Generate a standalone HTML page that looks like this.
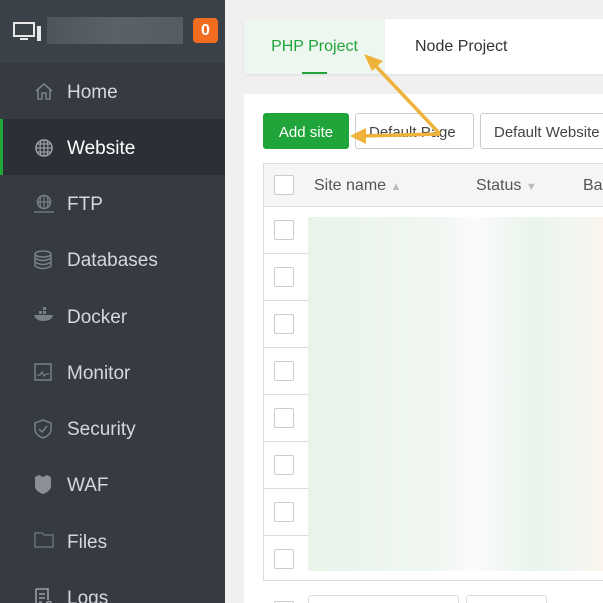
<!DOCTYPE html>
<html style="width:603px;height:603px;overflow:hidden"><head><style>
*{margin:0;padding:0;box-sizing:border-box}
body{width:603px;height:603px;overflow:hidden;background:#f0f0f0;font-family:"Liberation Sans",sans-serif;position:relative}
.sb{position:absolute;left:0;top:0;width:225px;height:603px;background:#353b41}
.hd{position:absolute;left:0;top:0;width:225px;height:63px;background:#3b4148}
.blur{position:absolute;left:47px;top:17px;width:136px;height:27px;background:linear-gradient(90deg,#4f555d,#5b6169,#565c64)}
.badge{position:absolute;left:193px;top:18px;width:25px;height:25px;background:#f36d21;border-radius:4px;color:#fff;font-weight:bold;font-size:16px;text-align:center;line-height:25px}
.item{position:absolute;left:0;width:225px;height:56px;color:#d3d8dd;font-size:19px;line-height:60px}
.item span{position:absolute;left:67px}
.item svg{position:absolute;left:34px;top:19px}
.act{background:#2b3036;color:#fff;border-left:3px solid #20a53a}
.tabs{position:absolute;left:244px;top:19px;width:370px;height:55px;background:#fff;border-radius:4px;box-shadow:0 1px 3px rgba(0,0,0,.08)}
.t1{position:absolute;left:0;top:0;width:141px;height:55px;background:#eef7ef;border-radius:4px 0 0 4px;color:#20a53a;font-size:16px;text-align:center;line-height:56px}
.t1:after{content:"";position:absolute;left:58px;bottom:0;width:25px;height:2px;background:#20a53a}
.t2{position:absolute;left:171px;top:0;font-size:16px;color:#333;line-height:56px}
.card{position:absolute;left:244px;top:94px;width:370px;height:520px;background:#fff}
.btn{position:absolute;top:113px;height:36px;border:1px solid #ccc;border-radius:3px;font-size:15px;color:#444;line-height:37px;padding:0 13px;background:#fff;white-space:nowrap}
.tbl{position:absolute;left:263px;top:163px;width:350px;height:418px;border:1px solid #ddd}
.th{height:43px;background:#f5f5f5;border-bottom:1px solid #ddd;position:relative;font-size:16px;color:#555;line-height:43px}
.cb{position:absolute;left:10px;width:20px;height:20px;border:1px solid #ccc;border-radius:2px;background:#fff}
.rl{position:absolute;left:0;width:44px;height:1px;background:#ddd}
.bl{position:absolute;left:308px;top:217px;width:300px;height:354px;background:linear-gradient(90deg,#e8f3ea 0%,#f1f7f2 45%,#fbfbfb 55%,#eaf4ec 75%,#f1f6f1 88%,#fdf4ee 100%)}
</style></head><body>
<div class="sb">
<div class="hd"><svg style="position:absolute;left:13px;top:22px" width="29" height="20" viewBox="0 0 29 20"><rect x="1" y="1" width="20" height="13" fill="none" stroke="#e8e8e8" stroke-width="2"/><rect x="7" y="16" width="8" height="2" fill="#e8e8e8"/><rect x="24" y="4" width="4" height="15" fill="#e8e8e8"/></svg><div class="blur"></div><div class="badge">0</div></div>
<div class="item" style="top:63px"><svg width="20" height="18" viewBox="0 0 20 18"><path d="M2 9L10 2L18 9M4 7V17H8V11H12V17H16V7" fill="none" stroke="#7a8088" stroke-width="1.6"/></svg><span>Home</span></div>
<div class="item act" style="top:119px"><svg style="left:31px" width="20" height="20" viewBox="0 0 20 20"><circle cx="10" cy="10" r="8" fill="none" stroke="#9aa0a6" stroke-width="1.6"/><path d="M2 10H18M10 2V18M4 6H16M4 14H16M7 3Q5 10 7 17M13 3Q15 10 13 17" fill="none" stroke="#9aa0a6" stroke-width="1.2"/></svg><span style="left:64px">Website</span></div>
<div class="item" style="top:175px"><svg width="20" height="20" viewBox="0 0 20 20"><circle cx="10" cy="8" r="6.5" fill="none" stroke="#7a8088" stroke-width="1.5"/><path d="M3.5 8H16.5M10 1.5V14.5M7 2Q5 8 7 14M13 2Q15 8 13 14M0 18H20" fill="none" stroke="#7a8088" stroke-width="1.2"/></svg><span>FTP</span></div>
<div class="item" style="top:231px"><svg width="18" height="20" viewBox="0 0 18 20"><ellipse cx="9" cy="4" rx="8" ry="3" fill="none" stroke="#7a8088" stroke-width="1.5"/><path d="M1 4V16Q9 21 17 16V4M1 8Q9 13 17 8M1 12Q9 17 17 12" fill="none" stroke="#7a8088" stroke-width="1.5"/></svg><span>Databases</span></div>
<div class="item" style="top:288px"><svg width="20" height="16" viewBox="0 0 20 16"><path d="M0 8H19Q18 14 9 14Q2 14 0 8Z" fill="#7a8088"/><rect x="5" y="4" width="3" height="3" fill="#7a8088"/><rect x="9" y="4" width="3" height="3" fill="#7a8088"/><rect x="9" y="0" width="3" height="3" fill="#7a8088"/></svg><span>Docker</span></div>
<div class="item" style="top:344px"><svg width="18" height="18" viewBox="0 0 18 18"><rect x="1" y="1" width="16" height="16" fill="none" stroke="#7a8088" stroke-width="1.5"/><path d="M3 12H6L8 9L10 13L12 11H15" fill="none" stroke="#7a8088" stroke-width="1.2"/></svg><span>Monitor</span></div>
<div class="item" style="top:400px"><svg width="18" height="20" viewBox="0 0 18 20"><path d="M9 1L17 4V10Q17 16 9 19Q1 16 1 10V4Z M5 10L8 13L13 7" fill="none" stroke="#7a8088" stroke-width="1.5"/></svg><span>Security</span></div>
<div class="item" style="top:456px"><svg width="18" height="20" viewBox="0 0 18 20"><path d="M1 2L5 0L9 2L13 0L17 2V11Q17 16 9 19Q1 16 1 11Z" fill="#8a9096"/></svg><span>WAF</span></div>
<div class="item" style="top:513px"><svg width="20" height="16" viewBox="0 0 20 16"><path d="M1 1H8L10 3H19V15H1Z" fill="none" stroke="#6a7078" stroke-width="1.5"/></svg><span>Files</span></div>
<div class="item" style="top:569px"><svg width="20" height="20" viewBox="0 0 20 20"><path d="M2 1H14V12M2 1V19H10M5 6H11M5 10H11M5 14H8" fill="none" stroke="#9aa0a6" stroke-width="1.6"/><circle cx="15" cy="16" r="2.5" fill="none" stroke="#9aa0a6" stroke-width="1.6"/></svg><span>Logs</span></div>
</div>
<div class="tabs"><div class="t1">PHP Project</div><div class="t2">Node Project</div></div>
<div class="card"></div>
<div class="btn" style="left:263px;background:#20a53a;border-color:#20a53a;color:#fff;width:86px;text-align:center;padding:0">Add site</div>
<div class="btn" style="left:355px;width:119px">Default Page</div>
<div class="btn" style="left:480px;width:140px">Default Website</div>
<div class="tbl">
<div class="th"><div class="cb" style="top:11px"></div><span style="position:absolute;left:50px">Site name <span style="color:#bbb;font-size:11px">▲</span></span><span style="position:absolute;left:212px">Status <span style="color:#bbb;font-size:11px">▼</span></span><span style="position:absolute;left:319px">Bac</span></div>
<div class="cb" style="top:56px"></div><div class="rl" style="top:89px"></div>
<div class="cb" style="top:103px"></div><div class="rl" style="top:136px"></div>
<div class="cb" style="top:150px"></div><div class="rl" style="top:183px"></div>
<div class="cb" style="top:197px"></div><div class="rl" style="top:230px"></div>
<div class="cb" style="top:244px"></div><div class="rl" style="top:277px"></div>
<div class="cb" style="top:291px"></div><div class="rl" style="top:324px"></div>
<div class="cb" style="top:338px"></div><div class="rl" style="top:371px"></div>
<div class="cb" style="top:385px"></div>
</div>
<div class="bl"></div>
<div style="position:absolute;left:308px;top:595px;width:151px;height:20px;border:1px solid #ddd;border-radius:3px;background:#fff"></div>
<div style="position:absolute;left:466px;top:595px;width:81px;height:20px;border:1px solid #ddd;border-radius:3px;background:#fff"></div>
<div style="position:absolute;left:274px;top:601px;width:20px;height:20px;border:1px solid #ccc;border-radius:2px;background:#fff"></div>
<svg style="position:absolute;left:0;top:0" width="603" height="603"><g stroke="#efb23a" stroke-width="3.5" fill="#efb23a" stroke-linejoin="round"><line x1="440" y1="134" x2="372" y2="62"/><line x1="440" y1="134" x2="360" y2="136"/></g><polygon points="364,54 383,61 372,71" fill="#efb23a"/><polygon points="350,136 366,128 366,144" fill="#efb23a"/></svg>
</body></html>
